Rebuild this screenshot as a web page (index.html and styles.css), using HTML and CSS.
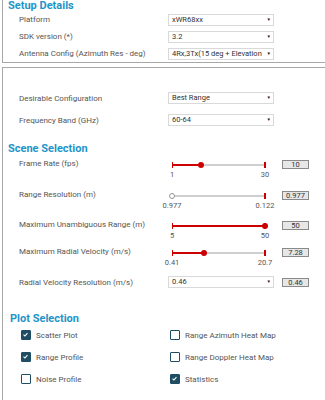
FILE: index.html
```html
<!DOCTYPE html>
<html lang="en">

<head>
    <meta charset="UTF-8">
    <meta name="viewport" content="width=device-width, initial-scale=1.0">
    <title>Sensing Estimator</title>
    <link rel="stylesheet" href="styles.css">
</head>

<body>
    <div class="panel panel-setup">
        <h2 class="section-title">Setup Details</h2>
        <div class="field-row">
            <label>Platform</label>
            <div class="select">xWR68xx<span class="arrow">&#9660;</span></div>
        </div>
        <div class="field-row">
            <label>SDK version (*)</label>
            <div class="select">3.2<span class="arrow">&#9660;</span></div>
        </div>
        <div class="field-row">
            <label>Antenna Config (Azimuth Res - deg)</label>
            <div class="select">4Rx,3Tx(15 deg + Elevation<span class="arrow">&#9660;</span></div>
        </div>
    </div>

    <div class="panel panel-scene">
        <div class="field-row field-row-wide">
            <label>Desirable Configuration</label>
            <div class="select">Best Range<span class="arrow">&#9660;</span></div>
        </div>
        <div class="field-row field-row-wide">
            <label>Frequency Band (GHz)</label>
            <div class="select">60-64<span class="arrow">&#9660;</span></div>
        </div>

        <h2 class="section-title scene-title">Scene Selection</h2>

        <div class="slider-row row-1">
            <label>Frame Rate (fps)</label>
            <div class="slider">
                <div class="track">
                    <div class="fill" style="width: 31%"></div>
                    <span class="tick tick-min"></span>
                    <span class="tick tick-max"></span>
                    <span class="thumb" style="left: 31%"></span>
                </div>
                <div class="limits"><span>1</span><span>30</span></div>
            </div>
            <div class="value">10</div>
        </div>
        <div class="slider-row row-2">
            <label>Range Resolution (m)</label>
            <div class="slider">
                <div class="track">
                    <div class="fill" style="width: 0%"></div>
                    <span class="tick tick-min"></span>
                    <span class="tick tick-max"></span>
                    <span class="thumb thumb-empty" style="left: 0%"></span>
                </div>
                <div class="limits"><span>0.977</span><span>0.122</span></div>
            </div>
            <div class="value">0.977</div>
        </div>
        <div class="slider-row row-3">
            <label>Maximum Unambiguous Range (m)</label>
            <div class="slider">
                <div class="track">
                    <div class="fill" style="width: 100%"></div>
                    <span class="tick tick-min"></span>
                    <span class="tick tick-max"></span>
                    <span class="thumb" style="left: 100%"></span>
                </div>
                <div class="limits"><span>5</span><span>50</span></div>
            </div>
            <div class="value">50</div>
        </div>
        <div class="slider-row row-4">
            <label>Maximum Radial Velocity (m/s)</label>
            <div class="slider">
                <div class="track">
                    <div class="fill" style="width: 34%"></div>
                    <span class="tick tick-min"></span>
                    <span class="tick tick-max"></span>
                    <span class="thumb" style="left: 34%"></span>
                </div>
                <div class="limits"><span>0.41</span><span>20.7</span></div>
            </div>
            <div class="value">7.28</div>
        </div>

        <div class="field-row field-row-wide">
            <label>Radial Velocity Resolution (m/s)</label>
            <div class="select">0.46<span class="arrow">&#9660;</span></div>
            <div class="value value-select">0.46</div>
        </div>

        <h2 class="section-title plot-title">Plot Selection</h2>
        <div class="plot-grid">
            <div class="check checked"><span class="box"><svg viewBox="0 0 10 10"><polyline points="2.2,5.2 4.2,7.2 7.8,3"/></svg></span>Scatter Plot</div>
            <div class="check"><span class="box"></span>Range Azimuth Heat Map</div>
            <div class="check checked"><span class="box"><svg viewBox="0 0 10 10"><polyline points="2.2,5.2 4.2,7.2 7.8,3"/></svg></span>Range Profile</div>
            <div class="check"><span class="box"></span>Range Doppler Heat Map</div>
            <div class="check"><span class="box"></span>Noise Profile</div>
            <div class="check checked"><span class="box"><svg viewBox="0 0 10 10"><polyline points="2.2,5.2 4.2,7.2 7.8,3"/></svg></span>Statistics</div>
        </div>
    </div>
</body>

</html>
```

FILE: styles.css
```css
* {
    box-sizing: border-box;
}

body {
    margin: 0;
    overflow: hidden;
    background: #fff;
    color: #555;
    font-family: Roboto, "Liberation Sans", sans-serif;
    font-size: 8px;
}

.panel {
    margin-left: 2px;
    width: 323px;
    border: 1px solid #a8a8a8;
    border-right: none;
}

.panel-setup {
    border-top: none;
}

.panel-scene {
    margin-top: 4px;
    padding-top: 19px;
    height: 333px;
    border-bottom: none;
}

.section-title {
    margin: 0;
    padding-left: 5px;
    color: #1e95c9;
    font-size: 11px;
    font-weight: bold;
    line-height: 11px;
}

.scene-title {
    margin-top: 12px;
    line-height: 12px;
}

.plot-title {
    margin-top: 20px;
    padding-left: 7px;
    line-height: 12px;
}

/* select rows */

.field-row {
    display: flex;
    align-items: center;
    height: 17px;
    padding-left: 16px;
}

.field-row-wide {
    height: 22px;
}

.field-row label {
    width: 149px;
    flex-shrink: 0;
}

.select {
    position: relative;
    width: 106px;
    height: 12px;
    padding-left: 3px;
    border: 1px solid #d9d9d9;
    color: #333;
    font-size: 7.5px;
    line-height: 10px;
    white-space: nowrap;
    overflow: hidden;
}

.select .arrow {
    position: absolute;
    right: 2px;
    top: 0;
    padding-left: 2px;
    background: #fff;
    font-size: 4.5px;
    line-height: 10px;
    color: #222;
}

/* sliders */

.slider-row {
    display: flex;
    align-items: flex-start;
    padding-left: 16px;
    height: 30px;
}

.slider-row.row-1 {
    margin-top: 4px;
    height: 31px;
}

.slider-row.row-3 {
    height: 27px;
}

.slider-row.row-4 {
    height: 24px;
}

.slider-row label {
    width: 149px;
    flex-shrink: 0;
    line-height: 10px;
}

.slider {
    width: 101px;
    padding: 0 4px;
}

.track {
    position: relative;
    margin-top: 5px;
    height: 1.5px;
    background: #cfcfcf;
}

.fill {
    height: 1.5px;
    background: #cc0000;
}

.tick {
    position: absolute;
    top: -2.5px;
    width: 1.5px;
    height: 6.5px;
    background: #cc0000;
}

.tick-min {
    left: -0.5px;
}

.tick-max {
    right: -0.5px;
}

.thumb {
    position: absolute;
    top: -2.25px;
    width: 6px;
    height: 6px;
    margin-left: -3px;
    border-radius: 50%;
    background: #cc0000;
}

.thumb-empty {
    background: #fff;
    border: 1px solid #999;
}

.limits {
    display: flex;
    justify-content: space-between;
    margin-top: 4px;
    margin-left: -12px;
    margin-right: -12px;
    color: #555;
    font-size: 7.5px;
    line-height: 9px;
}

.limits span {
    width: 24px;
    text-align: center;
}

.value {
    margin-left: 13px;
    margin-top: 1px;
    width: 27px;
    height: 9px;
    border: 1px solid #8a8a8a;
    background: #e7e7e7;
    color: #333;
    font-size: 7.5px;
    line-height: 7px;
    text-align: center;
}

.value-select {
    margin-left: 8px;
    margin-top: 0;
}

/* plot checkboxes */

.plot-grid {
    display: grid;
    grid-template-columns: 149px 149px;
    row-gap: 10px;
    margin-top: 4px;
    padding-left: 18px;
}

.check {
    display: flex;
    align-items: center;
    height: 12px;
    color: #555;
    font-size: 8px;
}

.check .box {
    width: 10px;
    height: 10px;
    margin-right: 5px;
    border: 1.5px solid #1f4d63;
    border-radius: 1px;
    background: #fff;
}

.check.checked .box {
    background: #1f4d63;
}

.check .box svg {
    display: block;
    width: 7px;
    height: 7px;
}

.check .box polyline {
    fill: none;
    stroke: #fff;
    stroke-width: 1.6;
}
```
